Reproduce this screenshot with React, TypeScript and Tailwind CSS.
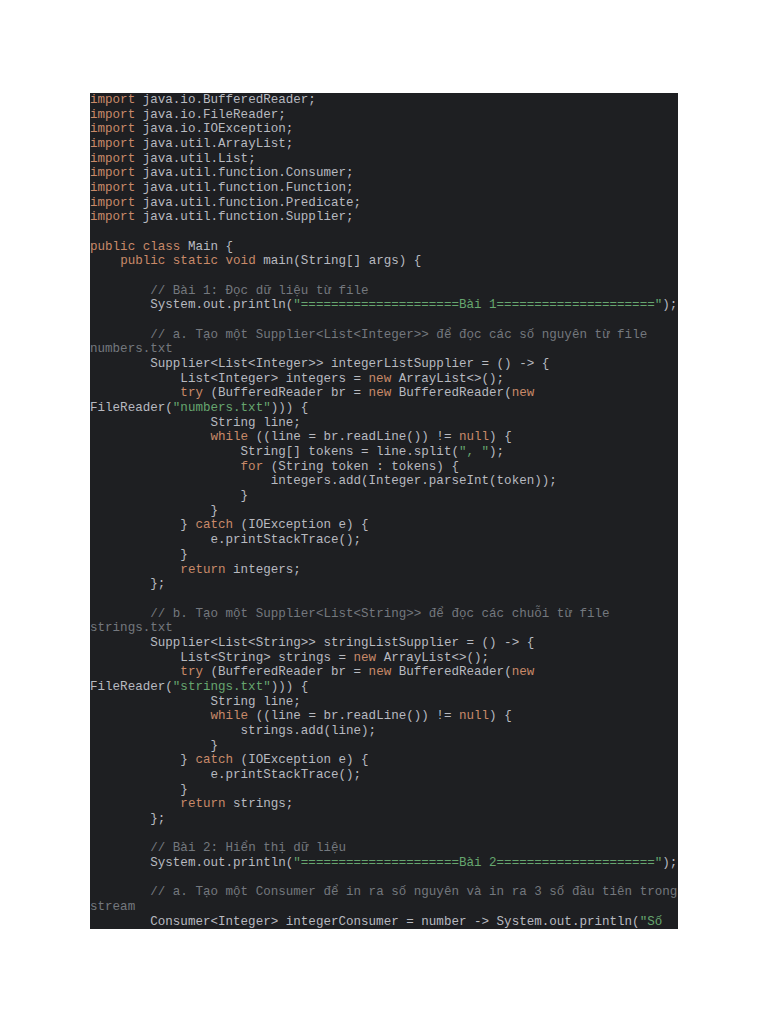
import React from "react";

const LINES: string[] = [
  "import java.io.BufferedReader;",
  "import java.io.FileReader;",
  "import java.io.IOException;",
  "import java.util.ArrayList;",
  "import java.util.List;",
  "import java.util.function.Consumer;",
  "import java.util.function.Function;",
  "import java.util.function.Predicate;",
  "import java.util.function.Supplier;",
  "",
  "public class Main {",
  "    public static void main(String[] args) {",
  "",
  "        // Bài 1: Đọc dữ liệu từ file",
  '        System.out.println("=====================Bài 1=====================");',
  "",
  "        // a. Tạo một Supplier<List<Integer>> để đọc các số nguyên từ file",
  "#numbers.txt",
  "        Supplier<List<Integer>> integerListSupplier = () -> {",
  "            List<Integer> integers = new ArrayList<>();",
  "            try (BufferedReader br = new BufferedReader(new",
  'FileReader("numbers.txt"))) {',
  "                String line;",
  "                while ((line = br.readLine()) != null) {",
  '                    String[] tokens = line.split(", ");',
  "                    for (String token : tokens) {",
  "                        integers.add(Integer.parseInt(token));",
  "                    }",
  "                }",
  "            } catch (IOException e) {",
  "                e.printStackTrace();",
  "            }",
  "            return integers;",
  "        };",
  "",
  "        // b. Tạo một Supplier<List<String>> để đọc các chuỗi từ file",
  "#strings.txt",
  "        Supplier<List<String>> stringListSupplier = () -> {",
  "            List<String> strings = new ArrayList<>();",
  "            try (BufferedReader br = new BufferedReader(new",
  'FileReader("strings.txt"))) {',
  "                String line;",
  "                while ((line = br.readLine()) != null) {",
  "                    strings.add(line);",
  "                }",
  "            } catch (IOException e) {",
  "                e.printStackTrace();",
  "            }",
  "            return strings;",
  "        };",
  "",
  "        // Bài 2: Hiển thị dữ liệu",
  '        System.out.println("=====================Bài 2=====================");',
  "",
  "        // a. Tạo một Consumer để in ra số nguyên và in ra 3 số đầu tiên trong",
  "#stream",
  '        Consumer<Integer> integerConsumer = number -> System.out.println("Số',
];

const KEYWORDS = new Set([
  "import",
  "public",
  "class",
  "static",
  "void",
  "new",
  "try",
  "while",
  "for",
  "catch",
  "return",
  "null",
]);

type Tok = { t: string; k: "kw" | "str" | "com" | "txt" };

function tokenize(line: string): Tok[] {
  if (line.startsWith("#")) return [{ t: line.slice(1), k: "com" }];
  const out: Tok[] = [];
  let i = 0;
  let buf = "";
  const flush = () => {
    if (buf) out.push({ t: buf, k: "txt" });
    buf = "";
  };
  while (i < line.length) {
    const c = line[i];
    if (c === "/" && line[i + 1] === "/") {
      flush();
      out.push({ t: line.slice(i), k: "com" });
      return out;
    }
    if (c === '"') {
      flush();
      let j = line.indexOf('"', i + 1);
      if (j === -1) j = line.length - 1;
      out.push({ t: line.slice(i, j + 1), k: "str" });
      i = j + 1;
      continue;
    }
    if (/[A-Za-z_]/.test(c)) {
      let j = i;
      while (j < line.length && /[A-Za-z0-9_]/.test(line[j])) j++;
      const w = line.slice(i, j);
      if (KEYWORDS.has(w)) {
        flush();
        out.push({ t: w, k: "kw" });
      } else buf += w;
      i = j;
      continue;
    }
    buf += c;
    i++;
  }
  flush();
  return out;
}

const COLOR: Record<Tok["k"], string> = {
  kw: "text-[#c98a69]",
  str: "text-[#66a66f]",
  com: "text-[#74787e]",
  txt: "text-[#b8bac0]",
};

export default function App() {
  return (
    <div className="min-h-[1024px] w-full bg-white pt-[93px]">
      <div className="mx-auto w-[588px] bg-[#1e1f22] font-['Liberation_Mono','DejaVu_Sans_Mono',monospace] text-[12.55px] leading-[14.68px]">
        {LINES.map((line, idx) => (
          <div key={idx} className="h-[14.68px] whitespace-pre">
            {tokenize(line).map((tok, i) => (
              <span key={i} className={COLOR[tok.k]}>
                {tok.t}
              </span>
            ))}
          </div>
        ))}
      </div>
    </div>
  );
}
